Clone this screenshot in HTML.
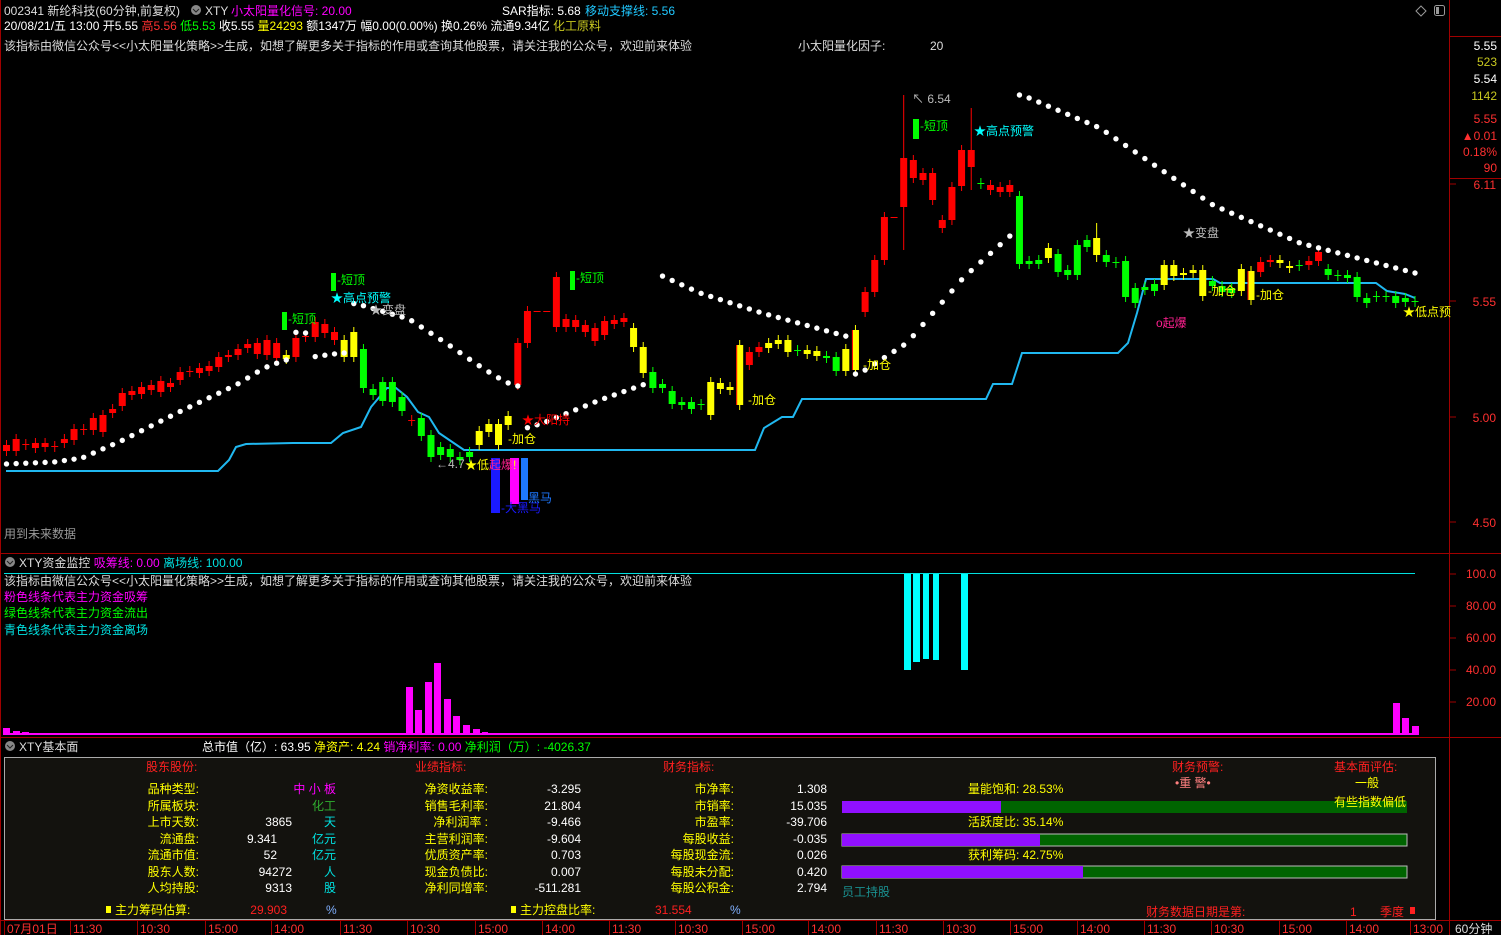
<!DOCTYPE html>
<html><head><meta charset="utf-8"><style>
html,body{margin:0;padding:0;background:#000;width:1501px;height:935px;overflow:hidden}
svg{display:block}
text{font-family:"Liberation Sans","WenQuanYi Zen Hei","Noto Sans CJK SC",sans-serif;font-size:12px}
</style></head><body>
<svg id="s" width="1501" height="935" xmlns="http://www.w3.org/2000/svg">
<rect width="1501" height="935" fill="#000"/>
<!-- frame lines -->
<g stroke="#a00000" stroke-width="1" fill="none">
<line x1="1449.5" y1="0" x2="1449.5" y2="935"/>
<line x1="1449" y1="36.5" x2="1501" y2="36.5"/>
<line x1="1449" y1="178.5" x2="1501" y2="178.5"/>
<line x1="0" y1="553.5" x2="1501" y2="553.5"/>
<line x1="0" y1="737.5" x2="1501" y2="737.5"/>
<line x1="0" y1="920.5" x2="1501" y2="920.5"/>
<line x1="0.5" y1="0" x2="0.5" y2="935"/>
</g>
<!-- axis ticks and labels main -->
<g fill="#ff3030" text-anchor="end">
<text x="1496" y="189">6.11</text>
<text x="1496" y="306">5.55</text>
<text x="1496" y="422">5.00</text>
<text x="1496" y="527">4.50</text>
<text x="1496" y="578">100.0</text>
<text x="1496" y="610">80.00</text>
<text x="1496" y="642">60.00</text>
<text x="1496" y="674">40.00</text>
<text x="1496" y="706">20.00</text>
</g>
<g stroke="#a00000"><line x1="1450" y1="184" x2="1456" y2="184"/><line x1="1450" y1="301" x2="1456" y2="301"/><line x1="1450" y1="417" x2="1456" y2="417"/><line x1="1450" y1="522" x2="1456" y2="522"/>
<line x1="1450" y1="574" x2="1456" y2="574"/><line x1="1450" y1="606" x2="1456" y2="606"/><line x1="1450" y1="638" x2="1456" y2="638"/><line x1="1450" y1="670" x2="1456" y2="670"/><line x1="1450" y1="702" x2="1456" y2="702"/></g>
<!-- quote box -->
<g text-anchor="end">
<text x="1497" y="50" fill="#fff">5.55</text>
<text x="1497" y="66" fill="#c8c820">523</text>
<text x="1497" y="83" fill="#fff">5.54</text>
<text x="1497" y="100" fill="#c8c820">1142</text>
<text x="1497" y="123" fill="#ff3030">5.55</text>
<text x="1497" y="140" fill="#ff3030">▲0.01</text>
<text x="1497" y="156" fill="#ff3030">0.18%</text>
<text x="1497" y="172" fill="#ff3030">90</text>
</g>
<!-- top right icons -->
<path d="M1421 6 L1426 11 L1421 16 L1416 11 Z" fill="none" stroke="#999"/>
<rect x="1434.5" y="5.5" width="10" height="10" rx="2" fill="none" stroke="#999"/><rect x="1436" y="7" width="3" height="7" fill="#999"/>
<!-- header -->
<text x="4" y="15" fill="#ddd">002341 新纶科技(60分钟,前复权)</text>
<circle cx="196" cy="10" r="5" fill="#888"/><path d="M193 9 L196 12 L199 9" stroke="#222" fill="none"/>
<text x="205" y="15" fill="#ddd">XTY</text>
<text x="231" y="15" fill="#ff00ff">小太阳量化信号: 20.00</text>
<text x="502" y="15" fill="#fff">SAR指标: 5.68</text>
<text x="585" y="15" fill="#20c8ff">移动支撑线: 5.56</text>
<text x="4" y="30" fill="#fff">20/08/21/五 13:00 开5.55 <tspan fill="#ff3030">高5.56</tspan> <tspan fill="#00ff00">低5.53</tspan> 收5.55 <tspan fill="#ffff00">量24293</tspan> 额1347万 幅0.00(0.00%) 换0.26% 流通9.34亿 <tspan fill="#c8c820">化工原料</tspan></text>
<text x="4" y="50" fill="#ddd">该指标由微信公众号&lt;&lt;小太阳量化策略&gt;&gt;生成，如想了解更多关于指标的作用或查询其他股票，请关注我的公众号，欢迎前来体验</text>
<text x="798" y="50" fill="#ddd">小太阳量化因子:</text>
<text x="930" y="50" fill="#ddd">20</text>
<text x="4" y="538" fill="#999">用到未来数据</text>
<g id="chart"></g>
<!-- labels main chart -->
<g>
<rect x="331" y="273" width="5" height="18" fill="#00ff00"/><text x="337" y="284" fill="#00ff00">-短顶</text>
<text x="331" y="302" fill="#00ffff">★高点预警</text>
<text x="370" y="314" fill="#bbb">★变盘</text>
<rect x="282" y="312" width="5" height="18" fill="#00ff00"/><text x="288" y="323" fill="#00ff00">-短顶</text>
<rect x="570" y="271" width="5" height="19" fill="#00ff00"/><text x="576" y="282" fill="#00ff00">-短顶</text>
<rect x="913" y="119" width="6" height="20" fill="#00ff00"/><text x="920" y="130" fill="#00ff00">-短顶</text>
<text x="974" y="135" fill="#00ffff">★高点预警</text>
<text x="912" y="103" fill="#bbb">↖ 6.54</text>
<text x="1183" y="237" fill="#bbb">★变盘</text>
<text x="1156" y="327" fill="#ff2090">o起爆</text>
<text x="1208" y="295" fill="#ffff00">-加仓</text>
<text x="1256" y="299" fill="#ffff00">-加仓</text>
<text x="1403" y="316" fill="#ffff00">★低点预</text>
<text x="748" y="404" fill="#ffff00">-加仓</text>
<text x="863" y="369" fill="#ffff00">-加仓</text>
<text x="508" y="443" fill="#ffff00">-加仓</text>
<text x="522" y="424" fill="#ff0000">★大阳持</text>
<text x="436" y="468" fill="#bbb">←4.7</text>
<rect x="491" y="458" width="9" height="55" fill="#1a1aff"/>
<rect x="510" y="458" width="9" height="46" fill="#ff00ff"/>
<rect x="521" y="458" width="7" height="42" fill="#1e78ff"/>
<text x="465" y="469" fill="#ffff00">★低<tspan fill="#ff2090">起爆</tspan>!</text>
<text x="501" y="512" fill="#1a1aff">-大黑马</text>
<text x="528" y="502" fill="#1e78ff">黑马</text>
</g>
<!-- panel 2 -->
<circle cx="10" cy="562" r="5" fill="#888"/><path d="M7 561 L10 564 L13 561" stroke="#222" fill="none"/>
<text x="19" y="567" fill="#ddd">XTY资金监控 <tspan fill="#ff00ff">吸筹线: 0.00</tspan> <tspan fill="#00e0e0">离场线: 100.00</tspan></text>
<line x1="4" y1="573.5" x2="1415" y2="573.5" stroke="#00e0e0"/>
<text x="4" y="585" fill="#ddd">该指标由微信公众号&lt;&lt;小太阳量化策略&gt;&gt;生成，如想了解更多关于指标的作用或查询其他股票，请关注我的公众号，欢迎前来体验</text>
<text x="4" y="601" fill="#ff00ff">粉色线条代表主力资金吸筹</text>
<text x="4" y="617" fill="#00ff00">绿色线条代表主力资金流出</text>
<text x="4" y="634" fill="#00e0e0">青色线条代表主力资金离场</text>
<g fill="#00ffff">
<rect x="904" y="574" width="7" height="96"/><rect x="913" y="574" width="7" height="88"/><rect x="923" y="574" width="6" height="85"/><rect x="933" y="574" width="6" height="86"/><rect x="961" y="574" width="7" height="96"/>
</g>
<g fill="#ff00ff">
<rect x="3" y="728" width="7" height="7"/><rect x="13" y="731" width="7" height="4"/><rect x="22" y="732" width="7" height="3"/><rect x="32" y="733" width="7" height="2"/><rect x="41" y="733" width="7" height="2"/>
<rect x="406" y="687" width="7" height="48"/><rect x="415" y="710" width="7" height="25"/><rect x="425" y="682" width="7" height="53"/><rect x="434" y="663" width="7" height="72"/><rect x="444" y="699" width="7" height="36"/><rect x="453" y="716" width="7" height="19"/><rect x="463" y="725" width="7" height="10"/><rect x="473" y="729" width="7" height="6"/><rect x="482" y="732" width="6" height="3"/><rect x="492" y="733" width="6" height="2"/>
<rect x="1393" y="703" width="7" height="32"/><rect x="1402" y="718" width="7" height="17"/><rect x="1412" y="726" width="7" height="9"/>
<rect x="3" y="733" width="1412" height="2"/>
</g>
<!-- panel 3 -->
<circle cx="10" cy="746" r="5" fill="#888"/><path d="M7 745 L10 748 L13 745" stroke="#222" fill="none"/>
<text x="19" y="751" fill="#ddd">XTY基本面</text>
<text x="202" y="751" fill="#fff">总市值（亿）: 63.95 <tspan fill="#ffff00">净资产: 4.24</tspan> <tspan fill="#ff00ff">销净利率: 0.00</tspan> <tspan fill="#00ff00">净利润（万）: -4026.37</tspan></text>
<rect x="4.5" y="757.5" width="1431" height="162" fill="#13120e" stroke="#aaa"/>
<g fill="#ff2020">
<text x="146" y="771">股东股份:</text><text x="415" y="771">业绩指标:</text><text x="663" y="771">财务指标:</text>
<text x="1172" y="771">财务预警:</text><text x="1334" y="771">基本面评估:</text>
<text x="1146" y="916">财务数据日期是第:</text><text x="1350" y="916">1</text><text x="1380" y="916">季度</text>
<text x="249" y="914" text-anchor="end" dx="38">29.903</text><text x="655" y="914">31.554</text>
</g>
<rect x="1410" y="907" width="5" height="7" fill="#ff2020"/>
<g fill="#ffff00" text-anchor="end">
<text x="199" y="793">品种类型:</text><text x="199" y="810">所属板块:</text><text x="199" y="826">上市天数:</text><text x="199" y="843">流通盘:</text><text x="199" y="859">流通市值:</text><text x="199" y="876">股东人数:</text><text x="199" y="892">人均持股:</text>
<text x="488" y="793">净资收益率:</text><text x="488" y="810">销售毛利率:</text><text x="488" y="826">净利润率 :</text><text x="488" y="843">主营利润率:</text><text x="488" y="859">优质资产率:</text><text x="488" y="876">现金负债比:</text><text x="488" y="892">净利同增率:</text>
<text x="734" y="793">市净率:</text><text x="734" y="810">市销率:</text><text x="734" y="826">市盈率:</text><text x="734" y="843">每股收益:</text><text x="734" y="859">每股现金流:</text><text x="734" y="876">每股未分配:</text><text x="734" y="892">每股公积金:</text>
</g>
<g fill="#fff" text-anchor="end">
<text x="292" y="826">3865</text><text x="277" y="843">9.341</text><text x="277" y="859">52</text><text x="292" y="876">94272</text><text x="292" y="892">9313</text>
<text x="581" y="793">-3.295</text><text x="581" y="810">21.804</text><text x="581" y="826">-9.466</text><text x="581" y="843">-9.604</text><text x="581" y="859">0.703</text><text x="581" y="876">0.007</text><text x="581" y="892">-511.281</text>
<text x="827" y="793">1.308</text><text x="827" y="810">15.035</text><text x="827" y="826">-39.706</text><text x="827" y="843">-0.035</text><text x="827" y="859">0.026</text><text x="827" y="876">0.420</text><text x="827" y="892">2.794</text>
</g>
<g text-anchor="end">
<text x="336" y="793" fill="#ff00ff">中 小 板</text><text x="336" y="810" fill="#30b030">化工</text>
<text x="336" y="826" fill="#00e0e0">天</text><text x="336" y="843" fill="#00e0e0">亿元</text><text x="336" y="859" fill="#00e0e0">亿元</text><text x="336" y="876" fill="#00e0e0">人</text><text x="336" y="892" fill="#00e0e0">股</text>
</g>
<rect x="106" y="906" width="5" height="7" fill="#ffff00"/><text x="115" y="914" fill="#ffff00">主力筹码估算:</text>
<text x="326" y="914" fill="#80b0ff">%</text>
<rect x="511" y="906" width="5" height="7" fill="#ffff00"/><text x="520" y="914" fill="#ffff00">主力控盘比率:</text>
<text x="730" y="914" fill="#80b0ff">%</text>
<text x="968" y="793" fill="#ffff00">量能饱和: 28.53%</text>
<text x="968" y="826" fill="#ffff00">活跃度比: 35.14%</text>
<text x="968" y="859" fill="#ffff00">获利筹码: 42.75%</text>
<rect x="842" y="801" width="565" height="12" fill="#006400"/><rect x="842" y="801" width="159" height="12" fill="#9010ff"/>
<rect x="842" y="834" width="565" height="12" fill="#006400" stroke="#bbb"/><rect x="842" y="834" width="198" height="12" fill="#9010ff"/>
<rect x="842" y="866" width="565" height="12" fill="#006400" stroke="#bbb"/><rect x="842" y="866" width="241" height="12" fill="#9010ff"/>
<text x="842" y="896" fill="#1a9090">员工持股</text>
<text x="1175" y="787" fill="#ff8080">•重 警•</text>
<text x="1355" y="787" fill="#ffff00">一般</text>
<text x="1334" y="806" fill="#ffff00">有些指数偏低</text>
<!-- time axis -->
<g id="tax" fill="#ff3030"></g>
<text x="1455" y="933" fill="#ddd">60分钟</text>
</svg>
<script>
var NS="http://www.w3.org/2000/svg",g=document.getElementById("chart");
function el(t,a){var e=document.createElementNS(NS,t);for(var k in a)e.setAttribute(k,a[k]);return e}
function poly(pts,c,w){g.appendChild(el("polyline",{points:pts.map(function(p){return p.join(",")}).join(" "),fill:"none",stroke:c,"stroke-width":w}))}
// support line
poly([[6,471],[218,471],[229,460],[236,447],[246,444],[293,443],[331,443],[343,433],[361,427],[371,407],[387,388],[396,388],[407,397],[418,412],[429,417],[439,433],[464,450],[755,450],[764,428],[782,417],[793,417],[802,399],[986,399],[993,384],[1012,384],[1022,353],[1118,353],[1128,343],[1137,313],[1146,279],[1213,279],[1220,283],[1376,283],[1387,291],[1405,294],[1415,298]],"#20b8f0",2);
var C=[["r",445,451],["r",439,451],["+",444],["r",443,448],["r",443,447],["+",446],["r",439,443],["r",429,440],["+",429],["r",418,430],["r",415,432],["r",409,413],["r",393,406],["r",391,395],["r",387,394],["r",385,390],["r",381,392],["r",383,387],["r",372,380],["+",371],["r",368,373],["r",366,371],["r",357,367],["r",355,357],["r",349,355],["r",344,348],["r",343,354],["r",340,355],["r",343,358],["y",355,359],["r",338,357],["+",336],["r",322,337],["r",324,333],["r",332,340],["y",340,357],["y",332,357],["g",349,388],["g",389,395],["g",382,401],["g",382,402],["g",397,411],["+",420],["g",418,436],["g",435,457],["g",447,455],["g",449,457],["g",457,460],["g",452,457],["y",431,445],["y",424,432],["y",424,445],["y",416,425],
["r",343,385],["r",311,343],["-",311],["-",311],["r",277,327],["r",319,327],["r",320,327],["r",325,332],["r",328,341],["r",321,335],["r",320,324],["r",318,322],["y",328,347],["y",347,373],["g",372,388],["g",384,388],["g",391,404],["g",402,405],["g",402,409],["+",404],["y",382,415],["y",383,389],["y",387,390],["Y",345,405],["r",352,365],["r",347,352],["y",343,348],["y",340,344],["y",340,352],["+",350],["y",350,354],["y",351,356],["g",356,358],["g",357,371],["y",349,371],["Y",330,370],["r",292,312],["r",260,292],["r",217,260],["-",217],["r",158,207,95,250],["r",160,178],["r",173,180],["r",173,200],["r",220,228],["r",187,220],["r",150,186],["r",150,167,108,190],["+",183],["r",185,190],["r",187,192],["r",185,192],["g",196,264],
["g",261,264],["g",260,264],["y",248,258],["g",254,272],["g",270,275],["g",245,275],["g",240,247],["y",238,255,223,262],["g",255,262],["+",262],["g",261,297],["g",288,303],["g",287,290],["g",284,291],["y",265,285],["y",265,276],["y",273,275],["y",270,273],["y",270,296],["g",281,286],["g",286,292],["g",288,293],["y",269,291],["Y",271,300],["r",262,272],["r",260,262],["y",260,263],["y",266,268],["+",265],["r",261,265],["r",252,261],["g",269,275],["+",275],["g",275,278],["g",277,297],["g",298,303],["+",296],["+",296],["g",296,303],["g",298,302],["+",301]];
var col={r:"#ff0000",g:"#00ff00",y:"#ffff00",Y:"#ffff00","+":"#00ff00","-":"#ff0000"};
var n=C.length,sp=(1415-6.5)/(n-1);
function cx(i){return 6.5+i*sp}
C.forEach(function(c,i){var x=cx(i),t=c[0],k=col[t];
 if(t=="+"||t=="-"){g.appendChild(el("rect",{x:x-3.5,y:c[1],width:7,height:1,fill:(t=="+"&&i<60)?"#ff0000":k}));if(t=="+")g.appendChild(el("rect",{x:x-0.5,y:c[1]-5,width:1,height:11,fill:(i<60)?"#ff0000":k}));return}
 var h=c[3]||c[1]-5,l=c[4]||c[2]+5;
 g.appendChild(el("rect",{x:x-0.5,y:h,width:1,height:l-h,fill:k}));
 g.appendChild(el("rect",{x:x-3.5,y:c[1],width:7,height:Math.max(2,c[2]-c[1]),fill:k}));
 if(t=="Y")g.appendChild(el("rect",{x:x-3.5,y:c[1],width:1,height:c[2]-c[1],fill:"#ff0000"}));
});
// SAR dots
var segs=[[[6,464],[54,462],[82,458],[121,441],[179,412],[236,385],[264,368],[285,360]],[[293,332],[302,333]],[[312,357],[341,353]],[[351,303],[361,305],[409,319],[446,343],[475,363],[495,376],[514,386]],[[523,429],[543,423],[600,400],[648,383]],[[658,274],[700,293],[762,313],[849,337]],[[859,374],[907,343],[964,277],[1011,235]],[[1022,95],[1100,128],[1213,205],[1300,243],[1415,273]]];
function interp(s,x){for(var j=0;j<s.length-1;j++){if(x>=s[j][0]&&x<=s[j+1][0]){var t=(x-s[j][0])/(s[j+1][0]-s[j][0]);return s[j][1]+t*(s[j+1][1]-s[j][1])}}return null}
for(var i=0;i<n;i++){var x=cx(i);for(var q=0;q<segs.length;q++){var s=segs[q];if(x>=s[0][0]-4&&x<=s[s.length-1][0]+4){var xx=Math.min(Math.max(x,s[0][0]),s[s.length-1][0]);var y=interp(s,xx);if(y!=null){g.appendChild(el("circle",{cx:x,cy:y,r:2.7,fill:"#fff"}));}break}}}
// time axis
var tax=document.getElementById("tax");var labs=["07月01日","11:30","10:30","15:00","14:00","11:30","10:30","15:00","14:00","11:30","10:30","15:00","14:00","11:30","10:30","15:00","14:00","11:30","10:30","15:00","14:00","13:00"];
var xs=[7,73,140,208,274,343,410,478,545,612,678,745,811,879,946,1013,1080,1147,1214,1282,1349,1413];
labs.forEach(function(l,i){var t=el("text",{x:xs[i],y:933});t.textContent=l;tax.appendChild(t);tax.appendChild(el("rect",{x:xs[i]-3,y:921,width:1,height:14,fill:"#a00000"}));});
</script>
</body></html>
